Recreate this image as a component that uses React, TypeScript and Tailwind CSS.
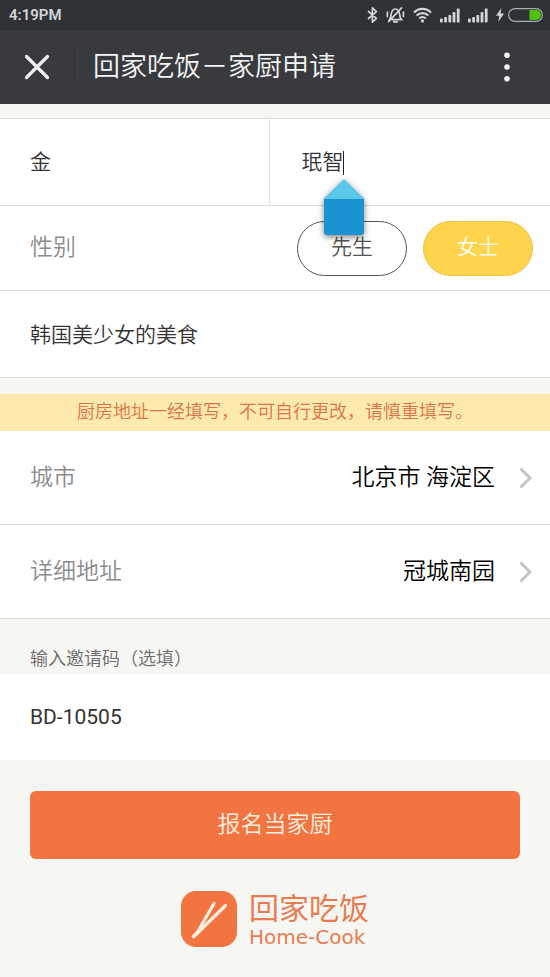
import { useState } from 'react'

function BluetoothIcon() {
  return (
    <svg width="11" height="18" viewBox="0 0 11 18" fill="none" stroke="currentColor" strokeWidth="1.7" strokeLinejoin="round">
      <path d="M1 5 L9.4 12.4 L5.4 16.2 V1.8 L9.4 5.6 L1 13" />
    </svg>
  )
}

function BellOffIcon() {
  return (
    <svg width="19" height="18" viewBox="0 0 19 18" fill="none" stroke="currentColor" strokeWidth="1.7" strokeLinecap="round">
      <path d="M4.6 11.5 C5.4 10 4.4 3 9.3 3 C14.2 3 13.4 9 14.2 11.5 L15.5 13.6 H6" />
      <path d="M4.6 11.5 L3.4 13.6" />
      <path d="M7.8 15.8 H11.2" strokeWidth="1.8" />
      <path d="M1.4 6.2 V10.4 M17.4 6.2 V10.4" />
      <path d="M15.6 1.8 L2.6 15.6" />
    </svg>
  )
}

function WifiIcon() {
  return (
    <svg width="19" height="16" viewBox="0 0 19 16" fill="none" stroke="currentColor" strokeWidth="2.1">
      <path d="M0.9 5.6 C5.6 0.6 13.4 0.6 18.1 5.6" />
      <path d="M3.6 8.6 C6.9 5.3 12.1 5.3 15.4 8.6" />
      <path d="M6.2 11.5 C8.1 9.7 10.9 9.7 12.8 11.5" />
      <circle cx="9.5" cy="13.9" r="1.6" fill="currentColor" stroke="none" />
    </svg>
  )
}

function SignalIcon() {
  return (
    <svg width="20" height="16" viewBox="0 0 20 16" fill="currentColor">
      <rect x="0" y="11.5" width="2.8" height="4" rx="0.8" />
      <rect x="4.2" y="10" width="2.8" height="5.5" rx="0.8" />
      <rect x="8.4" y="8" width="2.8" height="7.5" rx="0.8" />
      <rect x="12.6" y="5" width="2.8" height="10.5" rx="0.8" />
      <rect x="16.8" y="1.5" width="2.8" height="14" rx="0.8" />
    </svg>
  )
}

function BatteryIcon() {
  return (
    <svg width="35" height="14" viewBox="0 0 35 14" fill="none">
      <path d="M21.5 2 H28 A5 5 0 0 1 28 12 H21.5 Z" fill="#4fc20a" />
      <rect x="0.6" y="0.6" width="33.8" height="12.8" rx="6.4" stroke="#a9abac" strokeWidth="1.2" />
    </svg>
  )
}

function StatusBar() {
  return (
    <div className="flex h-[30px] items-center justify-between bg-[#2e3135] pl-[9px] pr-[7px] text-[#d3d5d6]">
      <span className="font-[Roboto] text-[15px] font-semibold">4:19PM</span>
      <div className="flex items-center gap-2">
        <BluetoothIcon />
        <BellOffIcon />
        <WifiIcon />
        <SignalIcon />
        <SignalIcon />
        <div className="flex items-center gap-1">
          <svg width="8" height="14" viewBox="0 0 8 14" fill="currentColor">
            <path d="M5.4 0 L0 7.8 H3.4 L2.2 14 L8 5.6 H4.6 Z" />
          </svg>
          <BatteryIcon />
        </div>
      </div>
    </div>
  )
}

function TitleBar() {
  return (
    <header className="flex h-[74px] items-center bg-[#383a3d] text-[#f4f5f6]">
      <button aria-label="关闭" className="flex h-9 w-[75px] items-center justify-center border-r border-[#2f3134]">
        <svg width="26" height="26" viewBox="0 0 26 26" fill="none" stroke="currentColor" strokeWidth="3.2" strokeLinecap="round">
          <path d="M2.5 2.5 L23.5 23.5 M23.5 2.5 L2.5 23.5" />
        </svg>
      </button>
      <h1 className="flex-1 pl-[18px] text-[27px] leading-9">回家吃饭－家厨申请</h1>
      <button aria-label="更多" className="mr-[31px] flex w-6 justify-center">
        <svg width="6" height="30" viewBox="0 0 6 30" fill="currentColor">
          <circle cx="3" cy="3.2" r="2.8" />
          <circle cx="3" cy="15" r="2.8" />
          <circle cx="3" cy="26.8" r="2.8" />
        </svg>
      </button>
    </header>
  )
}

// Insertion point and the drag handle hanging below it
function CursorHandle() {
  return (
    <div className="pointer-events-none absolute left-[50px] top-8 z-10 flex w-12 flex-col items-center">
      <span className="h-6 w-px bg-[#222]" />
      <svg className="mt-1 drop-shadow-[0_2px_3px_rgba(0,0,0,0.5)]" width="40" height="57" viewBox="0 0 40 57">
        <path d="M0 20 H40 V53 Q40 56 37 56 H3 Q0 56 0 53 Z" fill="#1c93d1" />
        <path d="M20 0 L39.5 19 Q40 20 39 20 H1 Q0 20 0.5 19 Z" fill="#5bc8ea" />
      </svg>
    </div>
  )
}

interface PickerRowProps {
  label: string
  value: string
}

function PickerRow({ label, value }: PickerRowProps) {
  return (
    <button className="flex h-[94px] w-full items-center border-b border-[#dedede] bg-white pl-[30px] pr-[18px] text-[23px] leading-8">
      <span className="text-[#8c8c8c]">{label}</span>
      <span className="ml-auto text-black">{value}</span>
      <svg className="ml-6" width="13" height="22" viewBox="0 0 13 22" fill="none" stroke="#c4c4c4" strokeWidth="3">
        <path d="M1.5 1.5 L11 11 L1.5 20.5" />
      </svg>
    </button>
  )
}

function Logo() {
  return (
    <div className="mt-8 flex items-center justify-center gap-3 text-[#e97b52]">
      <svg width="56" height="56" viewBox="0 0 56 56">
        <rect width="56" height="56" rx="15" fill="#f27441" />
        <g fill="none" stroke="#fdeede" strokeLinecap="round">
          <path d="M33 12.5 L16 42" strokeWidth="3.2" />
          <path d="M44.5 14.5 L15 43.5" strokeWidth="3.2" />
          <path d="M16 42 L12.5 45.5" strokeWidth="3.6" />
        </g>
      </svg>
      <div className="flex flex-col">
        <span className="text-[30px] font-normal leading-9">回家吃饭</span>
        <span className="font-['DejaVu_Sans'] text-xl font-normal leading-5">Home-Cook</span>
      </div>
    </div>
  )
}

const genders = ['先生', '女士']

export default function App() {
  const [lastName, setLastName] = useState('金')
  const [firstName, setFirstName] = useState('珉智')
  const [gender, setGender] = useState('女士')
  const [kitchen, setKitchen] = useState('韩国美少女的美食')
  const [code, setCode] = useState('BD-10505')

  return (
    <div className="min-h-screen bg-[#f6f7f3] font-['Roboto','Noto_Sans_CJK_SC',sans-serif] font-[350]">
      <StatusBar />
      <TitleBar />

      <form onSubmit={(e) => e.preventDefault()}>
        <div className="mt-3.5 flex h-[88px] border-y border-[#dedede] bg-white text-[21px] text-[#333]">
          <input
            aria-label="姓"
            value={lastName}
            onChange={(e) => setLastName(e.target.value)}
            className="w-[49%] border-r border-[#dedede] pl-[30px] pt-0.5 outline-none"
          />
          <div className="relative flex flex-1">
            <input
              aria-label="名"
              value={firstName}
              onChange={(e) => setFirstName(e.target.value)}
              className="w-full pl-8 pt-0.5 outline-none"
            />
            <CursorHandle />
          </div>
        </div>

        <div className="flex h-[85px] items-center justify-between border-b border-[#dedede] bg-white pl-[30px] pr-[17px]">
          <span className="text-[23px] leading-8 text-[#8c8c8c]">性别</span>
          <div className="flex gap-4">
            {genders.map((item) => (
              <button
                key={item}
                type="button"
                aria-pressed={gender === item}
                onClick={() => setGender(item)}
                className={`h-[55px] w-[110px] rounded-full border text-[21px] ${
                  gender === item
                    ? 'border-[#e8c24a] bg-[#fdd44b] text-white'
                    : 'border-[#555] bg-white text-[#555]'
                }`}
              >
                {item}
              </button>
            ))}
          </div>
        </div>

        <input
          aria-label="厨房名称"
          value={kitchen}
          onChange={(e) => setKitchen(e.target.value)}
          className="block h-[87px] w-full border-b border-[#dedede] bg-white pb-0.5 pl-[30px] text-[21px] text-[#333] outline-none"
        />

        <p className="mt-4 bg-[#fee9ae] pb-[5px] pt-1 text-center text-lg text-[#dd7448]">
          厨房地址一经填写，不可自行更改，请慎重填写。
        </p>
        <PickerRow label="城市" value="北京市 海淀区" />
        <PickerRow label="详细地址" value="冠城南园" />

        <label htmlFor="code" className="block pb-px pl-[30px] pt-[26px] text-lg text-[#6b6b6b]">
          输入邀请码（选填）
        </label>
        <input
          id="code"
          value={code}
          onChange={(e) => setCode(e.target.value)}
          className="block h-[86px] w-full bg-white pl-[30px] text-[21px] font-normal text-[#333] outline-none"
        />

        <div className="px-[30px] pt-[31px]">
          <button type="submit" className="h-[68px] w-full rounded-md bg-[#f27441] text-[23px] text-[#fff1e0]">
            报名当家厨
          </button>
        </div>
      </form>

      <Logo />
    </div>
  )
}
